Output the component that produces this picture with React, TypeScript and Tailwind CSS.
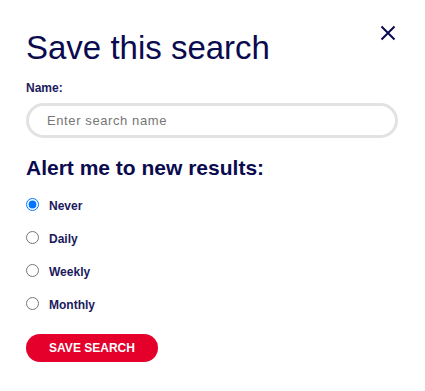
import { useState } from "react";

const options = ["Never", "Daily", "Weekly", "Monthly"];

export default function App() {
  const [alert, setAlert] = useState("Never");
  const [name, setName] = useState("");

  return (
    <div className="relative min-h-screen bg-white pl-[26px] pr-[27px] pt-[31px] font-['Liberation_Sans',Arial,sans-serif]">
      <button
        className="absolute right-[28px] top-[24px] flex h-[18px] w-[18px] items-center justify-center text-[#0a0a4e]"
        aria-label="Close"
      >
        <svg width="16" height="16" viewBox="0 0 16 16" fill="none" stroke="currentColor" strokeWidth="2">
          <path d="M1.5 1.5l13 13M14.5 1.5l-13 13" />
        </svg>
      </button>

      <h1 className="text-[33px] leading-none text-[#0a0a4e]">Save this search</h1>

      <label htmlFor="search-name" className="mt-[18px] block text-[12px] font-bold leading-none text-[#1b1a5e]">
        Name:
      </label>
      <input
        id="search-name"
        autoFocus
        value={name}
        onChange={(e) => setName(e.target.value)}
        placeholder="Enter search name"
        className="mt-[9px] block h-[35px] w-full rounded-full border-[3px] border-[#e2e2e2] pl-[18px] pr-[19px] text-[13px] tracking-[0.6px] text-[#333] caret-[#333] outline-none placeholder:text-[#767676]"
      />

      <h2 className="mt-[19px] text-[21px] font-bold leading-none text-[#0a0a4e]">Alert me to new results:</h2>

      <div className="mt-[10px] flex flex-col">
        {options.map((o) => (
          <label key={o} className="flex h-[33px] items-center gap-[10px] text-[12px] font-bold text-[#1b1a5e]">
            <input
              type="radio"
              name="alert"
              checked={alert === o}
              onChange={() => setAlert(o)}
              className="m-0 h-[13px] w-[13px]"
            />
            <span className="pt-[3px]">{o}</span>
          </label>
        ))}
      </div>

      <button className="mt-[14px] h-[28px] w-[132px] rounded-full bg-[#e4002b] text-[12px] font-bold text-white">
        SAVE SEARCH
      </button>
    </div>
  );
}
